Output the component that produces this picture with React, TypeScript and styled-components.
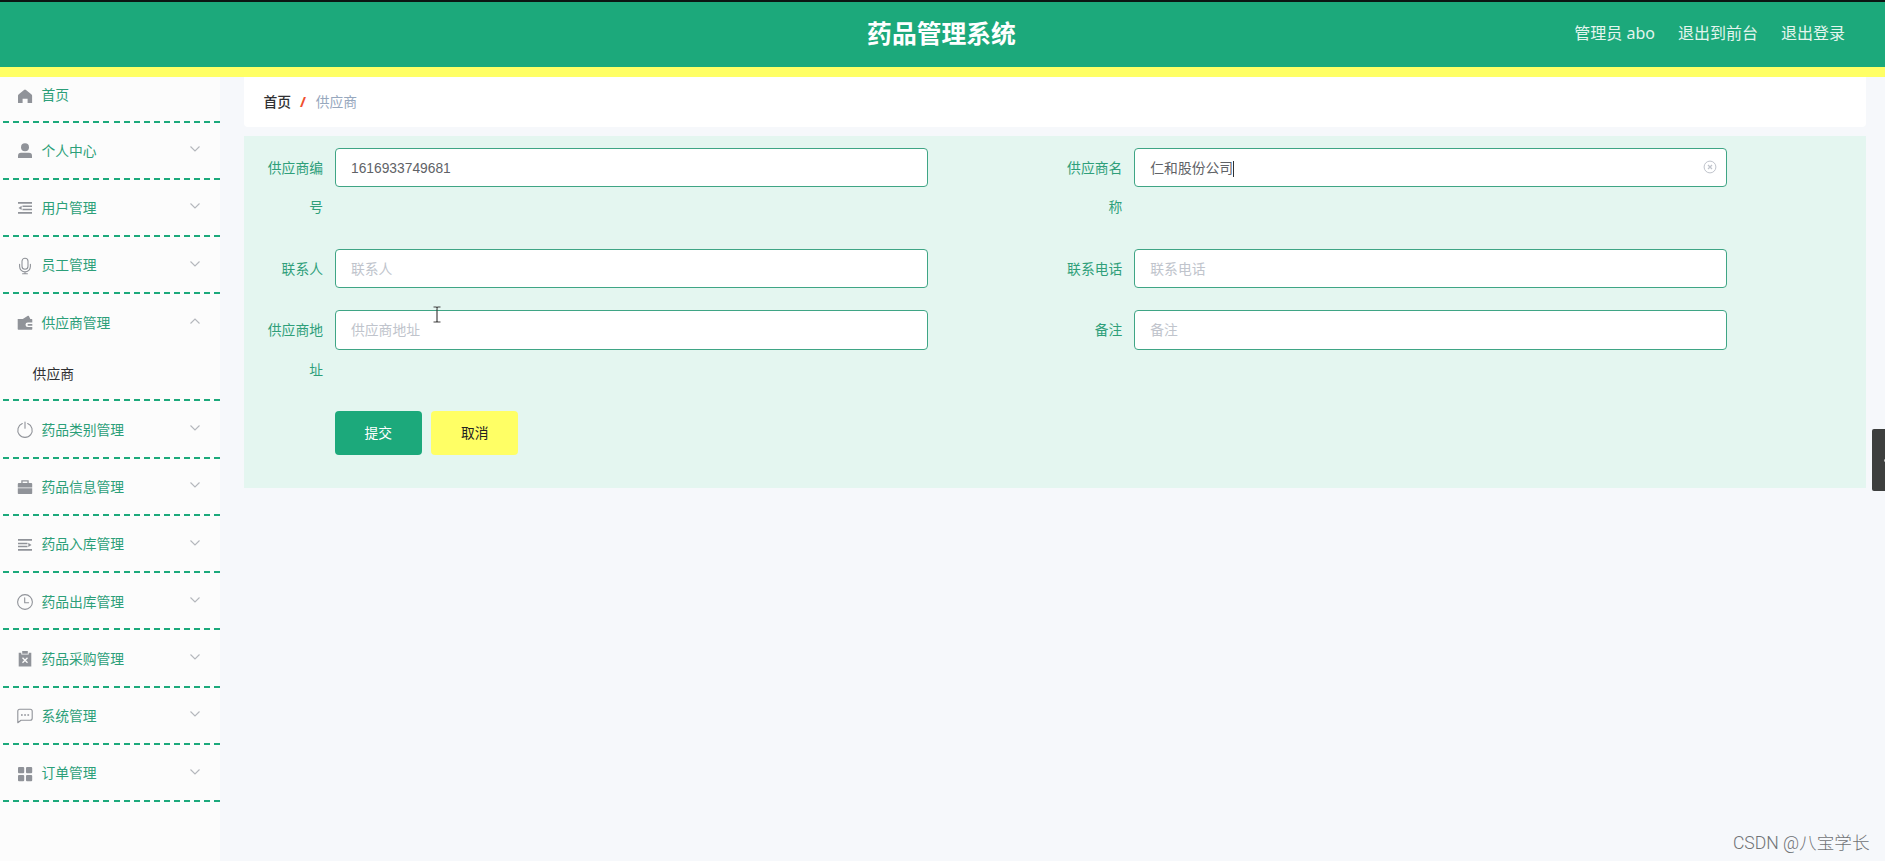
import React from "react";
import styled, { createGlobalStyle } from "styled-components";

const GREEN = "#1ca97b";
const YELLOW = "#ffff65";

const GlobalStyle = createGlobalStyle`
  * { box-sizing: border-box; }
  body {
    margin: 0;
    background: #f6f8fb;
    font-family: "Liberation Sans", "Noto Sans CJK SC", sans-serif;
    font-size: 13.8px;
    overflow: hidden;
  }
`;

const Page = styled.div`
  position: relative;
  height: 861px;
  display: flex;
  flex-direction: column;
  overflow: hidden;
`;

const Header = styled.header`
  display: grid;
  grid-template-columns: 1fr auto 1fr;
  align-items: start;
  height: 77px;
  flex: none;
  border-top: 2px solid #0c1512;
  border-bottom: 10px solid ${YELLOW};
  background: ${GREEN};
  padding: 0 40px 0 38px;
`;

const Title = styled.h1`
  grid-column: 2;
  margin: 0;
  color: #fff;
  font: 700 24.8px/60px "Noto Sans CJK SC", sans-serif;
`;

const UserNav = styled.nav`
  display: flex;
  justify-content: flex-end;
  gap: 23px;
  color: #e3f5ee;
  font: 400 16px/62px "Noto Sans", "Noto Sans CJK SC", sans-serif;
  white-space: nowrap;
`;

const Body = styled.div`
  display: flex;
  flex: 1;
`;

const Sidebar = styled.aside`
  width: 220px;
  flex: none;
  padding-left: 3px;
  background: #fcfcfc;
`;

const Group = styled.div`
  padding-bottom: 2px;
  background: repeating-linear-gradient(90deg, ${GREEN} 0 6px, transparent 6px 10.05px) left bottom / 100% 2px no-repeat;
`;

const MenuItem = styled.div<{ $first?: boolean }>`
  display: flex;
  align-items: center;
  height: ${(p) => (p.$first ? 43.5 : 55.3)}px;
  padding: ${(p) => (p.$first ? "0 19px 5.5px 12.8px" : "2px 19px 0 12.8px")};
  color: #2c9f79;
`;

const MenuIcon = styled.svg`
  width: 18px;
  height: 18px;
  flex: none;
  margin-right: 7.6px;
`;

const MenuLabel = styled.span<{ $first?: boolean }>`
  flex: 1;
  line-height: 20px;
  padding-top: ${(p) => (p.$first ? 0 : 1.4)}px;
`;

const Chevron = styled.svg<{ $open?: boolean }>`
  width: 12px;
  height: 8px;
  margin-bottom: 4px;
  transform: ${(p) => (p.$open ? "rotate(180deg)" : "none")};
`;

const SubItem = styled.div`
  height: 49.6px;
  padding-left: 29.6px;
  line-height: 50px;
  color: #303133;
`;

const Content = styled.main`
  flex: 1;
  padding: 0 19px 0 24px;
`;

const Breadcrumb = styled.div`
  display: flex;
  align-items: center;
  height: 49.5px;
  padding: 0 20px 1px 19.5px;
  border-radius: 0 0 4px 4px;
  background: #fff;
`;

const Crumb = styled.span<{ $current?: boolean }>`
  color: ${(p) => (p.$current ? "#97a8be" : "#303133")};
  font-weight: ${(p) => (p.$current ? 400 : 500)};
`;

const Slash = styled.span`
  width: 24.6px;
  padding-right: 1px;
  text-align: center;
  color: #f0502f;
  font: 700 14.5px "Noto Sans", sans-serif;
`;

const Form = styled.section`
  height: 352px;
  margin-top: 9.5px;
  padding: 12px 16px 0 12px;
  background: #e4f6f0;
`;

const Grid = styled.div`
  display: grid;
  grid-template-columns: 799.3px 1fr;
  row-gap: 22px;
`;

const Field = styled.div`
  display: flex;
  align-items: flex-start;
`;

const Label = styled.label`
  width: 79px;
  padding: 1px 12px 0 9px;
  margin-bottom: -1px;
  flex: none;
  text-align: right;
  line-height: 39.4px;
  word-break: break-all;
  color: #2f9f7a;
`;

const Input = styled.div<{ $placeholder?: boolean }>`
  display: flex;
  align-items: center;
  justify-content: space-between;
  width: 593px;
  height: 39.4px;
  padding: ${(p) => (p.$placeholder ? "0 9px 1px 15px" : "1px 9px 0 15px")};
  border: 1px solid #3fa585;
  border-radius: 4px;
  background: #fff;
  color: ${(p) => (p.$placeholder ? "#c0c4cc" : "#606266")};
`;

const Focused = styled.span`
  margin-top: 2px;
  border-right: 1px solid #303133;
  line-height: 16px;
`;

const ClearIcon = styled.svg`
  width: 14px;
  height: 14px;
  margin-bottom: 3px;
`;

const Actions = styled.div`
  display: flex;
  gap: 9.7px;
  padding: 22px 0 0 79px;
`;

const Button = styled.button<{ $primary?: boolean }>`
  width: 86.7px;
  height: 43.5px;
  padding: 0 0 2px;
  border: 0;
  border-radius: 4px;
  background: ${(p) => (p.$primary ? GREEN : YELLOW)};
  color: ${(p) => (p.$primary ? "#fff" : "#222")};
  font: inherit;
`;

const DrawerTab = styled.div`
  position: absolute;
  right: 0;
  top: 429px;
  width: 13px;
  height: 62px;
  border-radius: 2px 0 0 2px;
  background: #3d3f3e;
  overflow: hidden;
  &::after {
    content: "";
    position: absolute;
    right: -2px;
    top: 30px;
    width: 3px;
    height: 3px;
    border-radius: 50%;
    background: #c4c6c5;
  }
`;

const Pointer = styled.svg`
  position: absolute;
  left: 433px;
  top: 306px;
  width: 8px;
  height: 17px;
`;

const Watermark = styled.div`
  position: absolute;
  right: 15.5px;
  bottom: 5px;
  color: #707275;
  font: 300 17.6px/26px Roboto, "Noto Sans CJK SC", sans-serif;
  white-space: nowrap;
`;

const solid = { fill: "#909399" };
const line = { fill: "none", stroke: "#909399", strokeWidth: 1.1, strokeLinecap: "round" as const, strokeLinejoin: "round" as const };

const icons: Record<string, React.ReactNode> = {
  home: <path {...solid} d="M9 2.500q.5 0 1 .4l5.300 4.300q.8.600.8 1.400v7.400H11.600v-4.300H6.600v4.300H2V8.600q0-.8.8-1.400L8 2.900q.5-.4 1-.4Z" />,
  user: <><circle {...solid} cx="9" cy="5.300" r="4" /><path {...solid} d="M2 16v-2.200q0-3 3-3h8q3 0 3 3V16Z" /></>,
  fold: <><path {...solid} d="M2 3h14v1.700H2zM6.500 6.600H16v1.500H6.500zM6.500 9.700H16v1.500H6.500zM2 13h14v1.700H2z" /><path {...solid} d="M2.500 8.900 5.600 6.700v4.400Z" /></>,
  mic: <><rect {...line} x="6" y="1.200" width="6" height="11" rx="3" /><path {...line} d="M3.600 7.300v2.200a5.400 5.400 0 0 0 10.800 0V7.300M9 15v1.700M6.600 16.700h4.800" /></>,
  wallet: <path {...solid} d="M1.700 5h5.100l5.100-3.200q.6-.4 1 .3L14.300 5h1.300q.7 0 .7.700v2.800h-4.500a2.300 2.300 0 0 0 0 4.600h4.500v2q0 .7-.7.700H2.400q-.7 0-.7-.7Zm10.700 4.900h3.900v1.800h-3.900a.9.900 0 0 1 0-1.800Z" />,
  power: <path {...line} d="M6.300 2.500a7.200 7.200 0 1 0 5.400 0M9 1v6.200" />,
  briefcase: <path {...solid} d="M5.300 5V2.200h7.400V5h2.500q1 0 1 1v3.400H1.800V6q0-1 1-1Zm1.300 0h4.800V3.500H6.600ZM1.800 10.300h14.400v4.900q0 .7-.7.700h-13q-.7 0-.7-.7Z" />,
  unfold: <><path {...solid} d="M2 3h14v1.700H2zM2 6.700h9.500v1.500H2zM2 9.700h9.500v1.500H2zM2 13h14v1.700H2z" /><path {...solid} d="M15.500 8.900 12.300 6.700v4.400Z" /></>,
  clock: <><circle {...line} cx="9" cy="9" r="7.400" /><path {...line} d="M8.700 4.800v4.900h3.900" /></>,
  clipboard: <><path {...solid} d="M2.700 2.800h2.600v1.800h7.400V2.800h2.600v13.700H2.700ZM6.200 1h5.600v2.700H6.200Z" /><path d="m6.500 7.800 5 5m0-5-5 5" stroke="#fcfcfc" strokeWidth="1.300" fill="none" /></>,
  chat: <><path {...line} d="M3.800 2.200h10.400q2 0 2 2v7.100q0 2-2 2H5l-3.200 2.400V4.200q0-2 2-2Z" /><path {...solid} d="M5 7.200h1.700v1.500H5zM8.200 7.200h1.700v1.500H8.200zM11.400 7.200h1.700v1.500h-1.700z" /></>,
  grid: <><rect {...solid} x="2" y="2" width="6.200" height="6.200" rx="1" /><rect {...solid} x="10" y="2" width="6.200" height="6.200" rx="1" /><rect {...solid} x="2" y="10" width="6.200" height="6.200" rx="1" /><rect {...solid} x="10" y="10" width="6.200" height="6.200" rx="1" /></>,
};

interface Entry {
  icon: string;
  label: string;
  leaf?: boolean;
  children?: string[];
}

const menu: Entry[] = [
  { icon: "home", label: "首页", leaf: true },
  { icon: "user", label: "个人中心" },
  { icon: "fold", label: "用户管理" },
  { icon: "mic", label: "员工管理" },
  { icon: "wallet", label: "供应商管理", children: ["供应商"] },
  { icon: "power", label: "药品类别管理" },
  { icon: "briefcase", label: "药品信息管理" },
  { icon: "unfold", label: "药品入库管理" },
  { icon: "clock", label: "药品出库管理" },
  { icon: "clipboard", label: "药品采购管理" },
  { icon: "chat", label: "系统管理" },
  { icon: "grid", label: "订单管理" },
];

const fields = [
  { label: "供应商编号", value: "1616933749681" },
  { label: "供应商名称", value: "仁和股份公司", focused: true },
  { label: "联系人" },
  { label: "联系电话" },
  { label: "供应商地址" },
  { label: "备注" },
];

export default function App() {
  return (
    <Page>
      <GlobalStyle />
      <Header>
        <Title>药品管理系统</Title>
        <UserNav>
          <span>管理员 abo</span>
          <span>退出到前台</span>
          <span>退出登录</span>
        </UserNav>
      </Header>
      <Body>
        <Sidebar>
          {menu.map((m) => (
            <Group key={m.label}>
              <MenuItem $first={m.leaf}>
                <MenuIcon viewBox="0 0 18 18">{icons[m.icon]}</MenuIcon>
                <MenuLabel $first={m.leaf}>{m.label}</MenuLabel>
                {!m.leaf && (
                  <Chevron viewBox="0 0 12 8" $open={!!m.children}>
                    <path d="M1.500 1.500 6 5.900 10.500 1.500" fill="none" stroke="#b4b7bc" strokeWidth="1.100" />
                  </Chevron>
                )}
              </MenuItem>
              {m.children?.map((c) => <SubItem key={c}>{c}</SubItem>)}
            </Group>
          ))}
        </Sidebar>
        <Content>
          <Breadcrumb>
            <Crumb>首页</Crumb>
            <Slash>/</Slash>
            <Crumb $current>供应商</Crumb>
          </Breadcrumb>
          <Form>
            <Grid>
              {fields.map((f) => (
                <Field key={f.label}>
                  <Label>{f.label}</Label>
                  <Input $placeholder={!f.value}>
                    {f.focused ? <Focused>{f.value}</Focused> : <span>{f.value ?? f.label}</span>}
                    {f.focused && (
                      <ClearIcon viewBox="0 0 14 14" fill="none" stroke="#c0c4cc">
                        <circle cx="7" cy="7" r="5.900" />
                        <path d="m5 5 4 4m0-4-4 4" strokeWidth="1.200" />
                      </ClearIcon>
                    )}
                  </Input>
                </Field>
              ))}
            </Grid>
            <Actions>
              <Button $primary>提交</Button>
              <Button>取消</Button>
            </Actions>
          </Form>
        </Content>
      </Body>
      <DrawerTab />
      <Pointer viewBox="0 0 8 17" fill="none" stroke="#444" strokeWidth="1.200">
        <path d="M.5 1h2.700l.8.700.8-.7h2.700M4 1.500v14M.5 16h2.700l.8-.7.8.700h2.700" />
      </Pointer>
      <Watermark>CSDN @八宝学长</Watermark>
    </Page>
  );
}
